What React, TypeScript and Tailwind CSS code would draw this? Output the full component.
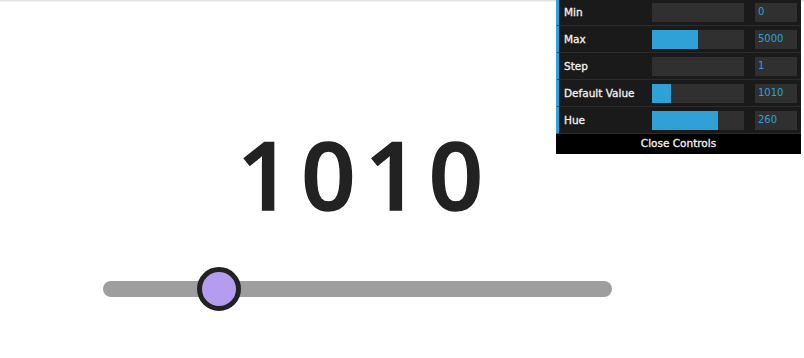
import { useState } from "react";

interface Control {
	label: string;
	value: number;
	min: number;
	max: number;
}

const CONTROLS: Control[] = [
	{ label: "Min", value: 0, min: 0, max: 10000 },
	{ label: "Max", value: 5000, min: 0, max: 10000 },
	{ label: "Step", value: 1, min: 1, max: 100 },
	{ label: "Default Value", value: 1010, min: 0, max: 5000 },
	{ label: "Hue", value: 260, min: 0, max: 360 },
];

function ControlRow({ control }: { control: Control }) {
	const pct = ((control.value - control.min) / (control.max - control.min)) * 100;
	return (
		<div className="flex h-[27px] items-center border-b border-l-[3px] border-b-[#2c2c2c] border-l-[#2fa1d6] bg-[#1a1a1a] pr-[4px]">
			<div className="w-[93px] shrink-0 pl-[5px] text-[10.5px] leading-none text-[#f2f2f2] [-webkit-text-stroke:0.3px_#f2f2f2]">
				{control.label}
			</div>
			<div className="h-[19px] w-[92px] shrink-0 bg-[#303030]">
				<div className="h-full bg-[#2fa1d6]" style={{ width: `${pct}%` }} />
			</div>
			<div className="ml-[11px] flex h-[19px] w-[42px] shrink-0 items-center bg-[#303030] pl-[3px] text-[10px] leading-none text-[#2fa1d6]">
				{control.value}
			</div>
		</div>
	);
}

export default function App() {
	const [value] = useState(1010);
	const max = 5000;
	const trackWidth = 509;
	const thumb = 44;
	const left = (value / max) * (trackWidth - thumb);

	return (
		<div className="relative h-[358px] w-full overflow-hidden bg-white font-['DejaVu_Sans',sans-serif]">
			<div className="h-px bg-[#e2e2e2]" />
			<div className="h-px bg-[#f2f2f2]" />

			<div className="ml-[103px] flex w-[509px] flex-col items-center pt-[124px]">
				<div className="pl-[15px] font-['Open_Sans',sans-serif] text-[95px] font-semibold leading-none tracking-widest text-[#222222] [-webkit-text-stroke:1.5px_#222222]">
					{value}
				</div>
				<div className="relative mt-[46px] flex h-[44px] w-full items-center">
					<div className="h-[16px] w-full rounded-full bg-[#9e9e9e]" />
					<div
						className="absolute top-0 h-[44px] w-[44px] rounded-full border-[5px] border-[#222222] bg-[#b49cee]"
						style={{ left }}
					/>
				</div>
			</div>

			<div className="absolute right-[3px] top-[-1px] w-[245px]">
				{CONTROLS.map((c) => (
					<ControlRow control={c} key={c.label} />
				))}
				<div className="flex h-[20px] items-center justify-center bg-black text-[10.5px] text-[#f2f2f2] [-webkit-text-stroke:0.3px_#f2f2f2]">
					Close Controls
				</div>
			</div>
		</div>
	);
}
